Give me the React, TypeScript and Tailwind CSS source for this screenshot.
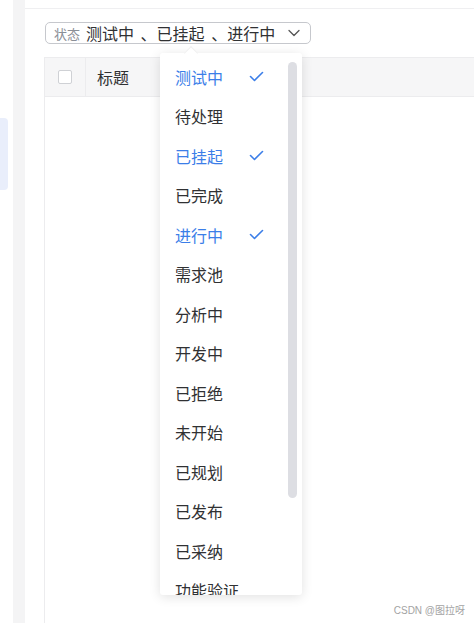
import React from "react";

const items: { label: string; selected?: boolean }[] = [
  { label: "测试中", selected: true },
  { label: "待处理" },
  { label: "已挂起", selected: true },
  { label: "已完成" },
  { label: "进行中", selected: true },
  { label: "需求池" },
  { label: "分析中" },
  { label: "开发中" },
  { label: "已拒绝" },
  { label: "未开始" },
  { label: "已规划" },
  { label: "已发布" },
  { label: "已采纳" },
  { label: "功能验证" },
];

function Check() {
  return (
    <svg width="15" height="11" viewBox="0 0 15 11" fill="none">
      <path d="M1.5 5.5 L5.5 9.5 L13.5 1.5" stroke="#3b7ee8" strokeWidth="1.6" strokeLinecap="round" strokeLinejoin="round" />
    </svg>
  );
}

export default function App() {
  return (
    <div
      className="relative flex w-[474px] h-[623px] overflow-hidden bg-white"
      style={{ fontFamily: '"Noto Sans CJK SC", "Noto Sans", sans-serif' }}
    >
      {/* far left */}
      <div className="w-[13px] flex flex-col pt-[118px]">
        <div className="w-[8px] h-[72px] rounded-r-[4px] bg-[#e9eefb]" />
      </div>
      <div className="w-[12px] bg-[#f4f4f5]" />
      {/* main */}
      <div className="flex-1 flex flex-col mt-[8px] border-t border-[#efeff1] pl-[19px]">
        <div className="pt-[13px] pl-[1px]">
          <div className="flex items-center w-[266px] h-[22px] border border-[#c6c8cd] rounded-[5px] pl-[8px] pr-[10px]">
            <span className="text-[13px] text-[#8b8f97] leading-none">状态</span>
            <span className="ml-[6px] text-[16px] text-[#303133] leading-none whitespace-nowrap [word-spacing:3px]">
              测试中 、已挂起 、进行中
            </span>
            <span className="ml-auto">
              <svg width="12" height="8" viewBox="0 0 12 8" fill="none">
                <path d="M1 1.5 L6 6.5 L11 1.5" stroke="#555" strokeWidth="1.3" strokeLinecap="round" strokeLinejoin="round" />
              </svg>
            </span>
          </div>
        </div>
        <div className="mt-[13px] flex-1 flex flex-col border-l border-[#ececee]">
          <div className="flex h-[40px] bg-[#f6f6f7] border-y border-[#ececee]">
            <div className="w-[41px] flex items-center justify-center border-r border-[#ececee]">
              <div className="w-[14px] h-[14px] rounded-[2px] border border-[#cfd1d5] bg-white" />
            </div>
            <div className="flex items-center pl-[11px] text-[16px] text-[#303133]">标题</div>
          </div>
          <div className="flex-1" />
        </div>
      </div>

      {/* dropdown */}
      <div className="absolute left-[160px] top-[53px] w-[142px] h-[542px] bg-white rounded-[3px] shadow-[0_2px_12px_rgba(0,0,0,0.12)]">
        <div className="absolute left-[26px] -top-[5px] w-[10px] h-[10px] bg-white rotate-45 border-l border-t border-[#f0f0f0]" />
        <div className="relative h-full overflow-hidden rounded-[3px]">
          <div className="flex flex-col pt-[4px]">
            {items.map((it) => (
              <div key={it.label} className="flex items-center h-[39.5px] pl-[15px] shrink-0">
                <span className={`text-[16px] ${it.selected ? "text-[#3b7ee8]" : "text-[#303133]"}`}>{it.label}</span>
                {it.selected && (
                  <span className="ml-[26px] flex">
                    <Check />
                  </span>
                )}
              </div>
            ))}
          </div>
          <div className="absolute right-[5px] top-[9px] w-[9px] h-[436px] rounded-full bg-[#dddee3]" />
        </div>
      </div>

      <div
        className="absolute right-[9px] bottom-[5px] text-[10px] text-[#a3a3a3]"
        style={{ fontFamily: '"Liberation Sans", "Noto Sans CJK SC", sans-serif' }}
      >
        CSDN @图拉呀
      </div>
    </div>
  );
}
